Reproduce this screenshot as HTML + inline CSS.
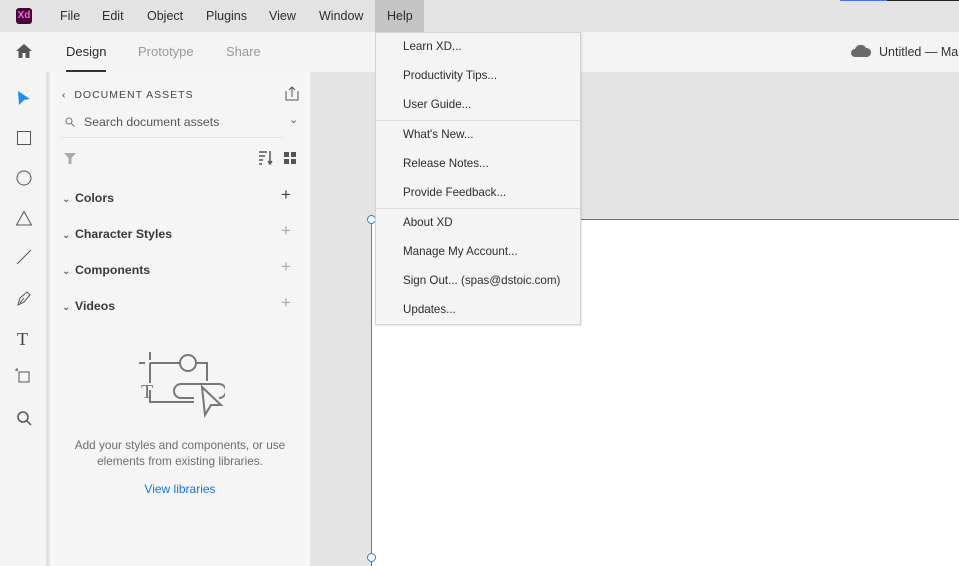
<!DOCTYPE html>
<html><head><meta charset="utf-8"><style>
*{margin:0;padding:0;box-sizing:border-box}
body{width:959px;height:566px;overflow:hidden;position:relative;background:#e4e4e4;font-family:"Segoe UI","Liberation Sans",sans-serif;font-size:12px;color:#323232}
.a{position:absolute}
.menu span{position:absolute;top:9px;font-size:12.5px;color:#2c2c2c}
.dd div.i{position:absolute;left:27px;font-size:11.6px;color:#2c2c2c}
.sec{position:absolute;left:62px;font-weight:bold;font-size:12.3px;color:#3a3a3a}
.sec b{font-weight:normal;display:inline-block;width:13px;font-size:10px}
.plus{position:absolute;left:281px;font-size:17px;color:#aaa;font-weight:300}
</style></head><body>
<div class="a menu" style="left:0;top:0;width:959px;height:32px;background:#e3e3e3">
 <div class="a" style="left:16px;top:8px;width:16px;height:16px;background:#470137;border-radius:3px;color:#ff61f6;font-size:10px;font-weight:bold;text-align:center;line-height:16px">Xd</div>
 <span style="left:60px">File</span><span style="left:102px">Edit</span><span style="left:147px">Object</span><span style="left:206px">Plugins</span><span style="left:269px">View</span><span style="left:319px">Window</span>
 <div class="a" style="left:375px;top:0;width:49px;height:32px;background:#c4c4c4"></div>
 <span style="left:387px">Help</span>
 <div class="a" style="left:840px;top:0;width:47px;height:1px;background:#4b6cf0"></div>
 <div class="a" style="left:887px;top:0;width:72px;height:1px;background:#222"></div>
</div>
<div class="a" style="left:0;top:32px;width:959px;height:40px;background:#f4f4f4">
 <svg class="a" style="left:15px;top:11px" width="18" height="16" viewBox="0 0 18 16"><path d="M9 1L1 8h2.5v7h4v-5h3v5h4V8H17z" fill="#555"/></svg>
 <div class="a" style="left:66px;top:12px;font-size:13px;color:#2c2c2c">Design</div>
 <div class="a" style="left:66px;top:38px;width:40px;height:2px;background:#333"></div>
 <div class="a" style="left:138px;top:12px;font-size:13px;color:#999">Prototype</div>
 <div class="a" style="left:226px;top:12px;font-size:13px;color:#999">Share</div>
 <svg class="a" style="left:850px;top:12px" width="22" height="14" viewBox="0 0 22 14"><path d="M5 13a4 4 0 0 1 0-8 6 6 0 0 1 11-1 4.5 4.5 0 0 1 1 9z" fill="#6a6a6a"/></svg>
 <div class="a" style="left:879px;top:13px;font-size:12.5px;white-space:nowrap">Untitled — Mar</div>
</div>
<div class="a" style="left:0;top:72px;width:48px;height:494px;background:#f4f4f4;border-right:2px solid #e0e0e0"></div>
<svg class="a" style="left:0;top:72px" width="48" height="494">
 <path d="M18 19l12 8-6 1-5 5z" fill="#1e8ef0"/>
 <rect x="17.5" y="59.5" width="13" height="13" fill="none" stroke="#555"/>
 <circle cx="24" cy="106" r="7" fill="none" stroke="#555"/>
 <path d="M16.5 153h15L24 139.5z" fill="none" stroke="#555"/>
 <path d="M17 192l14-14" stroke="#555"/>
 <path d="M18 233l2-7 7-6 3 3-6 7z M24 226l-4 5" fill="none" stroke="#555"/>
 <text x="17" y="273" font-family="Liberation Serif" font-size="18" fill="#444">T</text>
 <path d="M19 300h10v10h-10zM15 298h3M17 296v3" fill="none" stroke="#555"/>
 <circle cx="23" cy="345" r="5" fill="none" stroke="#555" stroke-width="1.5"/><path d="M27 349l4 4" stroke="#555" stroke-width="1.5"/>
</svg>
<div class="a" style="left:50px;top:72px;width:260px;height:494px;background:#f5f5f5"></div>
<div class="a" style="left:62px;top:89px;font-size:10.5px;letter-spacing:1px;color:#444">‹&nbsp; DOCUMENT ASSETS</div>
<svg class="a" style="left:284px;top:85px" width="16" height="16"><path d="M2 6v9h12V6M8 12V2M5 5l3-3 3 3" fill="none" stroke="#555"/></svg>
<svg class="a" style="left:65px;top:117px" width="10" height="10"><circle cx="4" cy="4" r="3" fill="none" stroke="#777"/><path d="M6.5 6.5l3 3" stroke="#777"/></svg>
<div class="a" style="left:84px;top:115px;font-size:12.3px;color:#555">Search document assets</div>
<div class="a" style="left:289px;top:113px;font-size:11px;color:#555">⌄</div>
<div class="a" style="left:61px;top:137px;width:222px;height:1px;background:#e2e2e2"></div>
<svg class="a" style="left:63px;top:151px" width="14" height="14"><path d="M1 2h12l-4.5 5v6h-3V7z" fill="#aaa"/></svg>
<svg class="a" style="left:258px;top:150px" width="40" height="16"><path d="M1 2h8M1 6h6M1 10h4M1 14h3M12 1v13M10 11l2 3 2-3" fill="none" stroke="#555" stroke-width="1.5"/><rect x="26" y="2" width="5" height="5" fill="#555"/><rect x="33" y="2" width="5" height="5" fill="#555"/><rect x="26" y="9" width="5" height="5" fill="#555"/><rect x="33" y="9" width="5" height="5" fill="#555"/></svg>
<div class="sec" style="top:191px"><b>⌄</b>Colors</div><div class="plus" style="top:185px;color:#444">+</div>
<div class="sec" style="top:227px"><b>⌄</b>Character Styles</div><div class="plus" style="top:221px">+</div>
<div class="sec" style="top:263px"><b>⌄</b>Components</div><div class="plus" style="top:257px">+</div>
<div class="sec" style="top:299px"><b>⌄</b>Videos</div><div class="plus" style="top:293px">+</div>
<svg class="a" style="left:135px;top:350px" width="90" height="70" fill="none" stroke="#777" stroke-width="2"><path d="M4 13h6M15 2v8M15 13h30M62 13h10v18M15 13v20M15 40v12h44"/><circle cx="53" cy="13" r="8"/><path d="M59 48H46a7 7 0 0 1 0-14h38a7 7 0 0 1 0 14"/><path d="M67 37l19 18-10 0-6 10z" fill="#f5f5f5"/><text x="6" y="48" font-family="Liberation Serif" font-size="20" fill="#777" stroke="none">T</text></svg>
<div class="a" style="left:50px;top:437px;width:260px;text-align:center;font-size:11.8px;color:#6e6e6e;line-height:16px">Add your styles and components, or use<br>elements from existing libraries.</div>
<div class="a" style="left:50px;top:482px;width:260px;text-align:center;font-size:12px;color:#1473e6">View libraries</div>
<div class="a" style="left:371px;top:219px;width:588px;height:347px;background:#fff;border-top:1px solid #2d7be5"></div>
<div class="a" style="left:371px;top:219px;width:1px;height:347px;background:#6b7a99"></div>
<div class="a" style="left:367px;top:215px;width:9px;height:9px;border-radius:50%;border:1px solid #2d7be5;background:#fff"></div>
<div class="a" style="left:367px;top:553px;width:9px;height:9px;border-radius:50%;border:1px solid #2d7be5;background:#fff"></div>
<div class="a dd" style="left:375px;top:32px;width:206px;height:293px;background:#f4f4f4;border:1px solid #d4d4d4;box-shadow:1px 1px 2px rgba(0,0,0,.1)">
 <div class="i" style="top:7px">Learn XD...</div>
 <div class="i" style="top:36px">Productivity Tips...</div>
 <div class="i" style="top:65px">User Guide...</div>
 <div class="a" style="left:0;top:87px;width:204px;height:1px;background:#dcdcdc"></div>
 <div class="i" style="top:95px">What's New...</div>
 <div class="i" style="top:124px">Release Notes...</div>
 <div class="i" style="top:153px">Provide Feedback...</div>
 <div class="a" style="left:0;top:175px;width:204px;height:1px;background:#dcdcdc"></div>
 <div class="i" style="top:183px">About XD</div>
 <div class="i" style="top:212px">Manage My Account...</div>
 <div class="i" style="top:241px">Sign Out... (spas@dstoic.com)</div>
 <div class="i" style="top:270px">Updates...</div>
</div>
</body></html>
